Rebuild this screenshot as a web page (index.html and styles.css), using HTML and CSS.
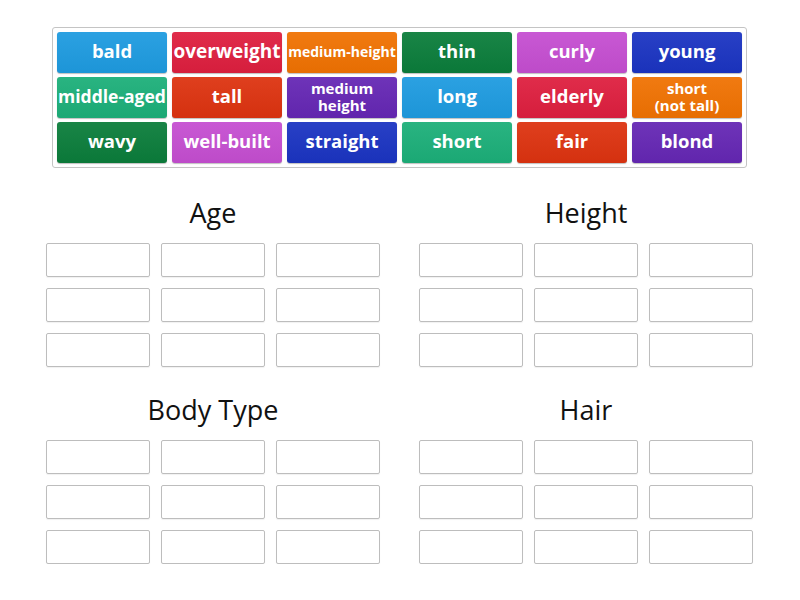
FILE: index.html
```html
<!DOCTYPE html>
<html lang="en">
<head>
    <meta charset="UTF-8">
    <meta name="viewport" content="width=device-width, initial-scale=1.0">
    <title>Describing People - Group Sort</title>
    <link rel="stylesheet" href="styles.css">
</head>
<body>
    <!-- Word bank -->
    <div class="bank">
        <div class="tile blue">bald</div>
        <div class="tile crimson wide">overweight</div>
        <div class="tile orange small">medium-height</div>
        <div class="tile green">thin</div>
        <div class="tile magenta">curly</div>
        <div class="tile navy">young</div>

        <div class="tile teal narrow">middle-aged</div>
        <div class="tile red">tall</div>
        <div class="tile purple two">medium<br>height</div>
        <div class="tile blue">long</div>
        <div class="tile crimson">elderly</div>
        <div class="tile orange two">short<br>(not tall)</div>

        <div class="tile green">wavy</div>
        <div class="tile magenta">well-built</div>
        <div class="tile navy">straight</div>
        <div class="tile teal">short</div>
        <div class="tile red">fair</div>
        <div class="tile purple">blond</div>
    </div>

    <!-- Groups -->
    <div class="groups">
        <div class="group">
            <h2>Age</h2>
            <div class="slots">
                <div class="slot"></div><div class="slot"></div><div class="slot"></div>
                <div class="slot"></div><div class="slot"></div><div class="slot"></div>
                <div class="slot"></div><div class="slot"></div><div class="slot"></div>
            </div>
        </div>
        <div class="group">
            <h2>Height</h2>
            <div class="slots">
                <div class="slot"></div><div class="slot"></div><div class="slot"></div>
                <div class="slot"></div><div class="slot"></div><div class="slot"></div>
                <div class="slot"></div><div class="slot"></div><div class="slot"></div>
            </div>
        </div>
        <div class="group">
            <h2>Body Type</h2>
            <div class="slots">
                <div class="slot"></div><div class="slot"></div><div class="slot"></div>
                <div class="slot"></div><div class="slot"></div><div class="slot"></div>
                <div class="slot"></div><div class="slot"></div><div class="slot"></div>
            </div>
        </div>
        <div class="group">
            <h2>Hair</h2>
            <div class="slots">
                <div class="slot"></div><div class="slot"></div><div class="slot"></div>
                <div class="slot"></div><div class="slot"></div><div class="slot"></div>
                <div class="slot"></div><div class="slot"></div><div class="slot"></div>
            </div>
        </div>
    </div>
</body>
</html>
```

FILE: styles.css
```css
/* Genel */
body {
    margin: 0;
    background-color: #fff;
    font-family: "Open Sans", "Liberation Sans", sans-serif;
    color: #111;
}

/* Kelime kutusu */
.bank {
    width: 695px;
    margin: 27px 0 0 52px;
    padding: 4px;
    box-sizing: border-box;
    border: 1px solid #c4c4c4;
    border-radius: 3px;
    display: grid;
    grid-template-columns: repeat(6, 110px);
    grid-auto-rows: 41px;
    column-gap: 5px;
    row-gap: 4px;
}

.tile {
    display: flex;
    align-items: center;
    justify-content: center;
    text-align: center;
    padding-bottom: 2px;
    box-sizing: border-box;
    color: #fff;
    font-weight: 700;
    font-size: 18.5px;
    line-height: 1;
    border-radius: 3px;
    box-shadow: 0 1px 1px rgba(0, 0, 0, 0.25);
    background-image: linear-gradient(rgba(255, 255, 255, 0.06), rgba(0, 0, 0, 0.04));
    white-space: nowrap;
}

.tile.wide {
    font-size: 19px;
}

.tile.narrow {
    font-size: 17.5px;
}

.tile.small {
    font-size: 14px;
}

.tile.two {
    font-size: 15px;
    line-height: 17px;
}

.blue { background-color: #1e9be0; }
.crimson { background-color: #de1f3f; }
.orange { background-color: #f07202; }
.green { background-color: #0b7d3b; }
.magenta { background-color: #c54ed1; }
.navy { background-color: #1b34c2; }
.teal { background-color: #1caf79; }
.red { background-color: #dd3310; }
.purple { background-color: #6527b4; }

/* Gruplar */
.groups {
    display: grid;
    grid-template-columns: 334px 334px;
    column-gap: 39px;
    row-gap: 25px;
    margin: 27px 0 0 46px;
}

.group h2 {
    margin: 0 0 12px;
    font-size: 27px;
    font-weight: 400;
    line-height: 36px;
    text-align: center;
}

.slots {
    display: grid;
    grid-template-columns: repeat(3, 104px);
    grid-auto-rows: 34px;
    gap: 11px;
}

.slot {
    border: 1px solid #bdbdbd;
    border-radius: 2px;
    box-shadow: 0 1px 1px rgba(0, 0, 0, 0.06);
}
```
